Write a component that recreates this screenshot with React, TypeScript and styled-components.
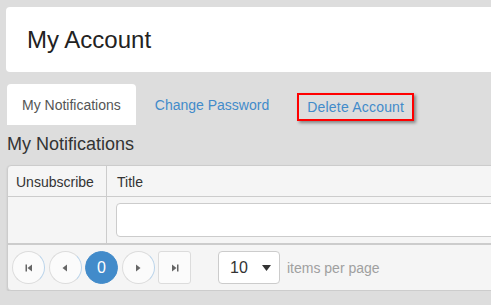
import React from "react";
import styled, { createGlobalStyle } from "styled-components";

const Global = createGlobalStyle`
  html, body { margin: 0; padding: 0; overflow: hidden; background: #dddddd; }
  body { font-family: "Liberation Sans", Arial, sans-serif; color: #333; }
`;

const Page = styled.div`
  width: 540px;
  padding: 7px 0 0 6px;
  box-sizing: border-box;
`;

const HeaderCard = styled.div`
  height: 65px;
  background: #fff;
  border-radius: 4px;
  display: flex;
  align-items: center;
  padding-left: 21px;
`;

const Title = styled.h1`
  margin: 0;
  font-size: 24px;
  font-weight: 400;
  color: #222;
`;

const Tabs = styled.div`
  display: flex;
  align-items: stretch;
  height: 41px;
  margin-top: 12px;
  padding-left: 1px;
`;

const Tab = styled.div<{ $active?: boolean }>`
  display: flex;
  align-items: center;
  padding: 0 15px;
  margin-right: 4px;
  font-size: 14px;
  border-radius: 4px 4px 0 0;
  background: ${(p) => (p.$active ? "#fff" : "transparent")};
  color: ${(p) => (p.$active ? "#555" : "#428bca")};
`;

const HighlightTab = styled.div`
  display: flex;
  align-items: center;
  margin-left: 9px;
`;

const Highlight = styled.span`
  display: flex;
  align-items: center;
  height: 24px;
  margin-top: 4px;
  padding: 0 8px 0 8px;
  border: 2px solid #ff0000;
  box-shadow: 2px 2px 3px rgba(0, 0, 0, 0.4);
  font-size: 14px;
  letter-spacing: 0.2px;
  color: #428bca;
`;

const Section = styled.div`
  padding-left: 1px;
`;

const SectionTitle = styled.h2`
  margin: 9px 0 11px;
  font-size: 18px;
  line-height: 20px;
  font-weight: 400;
  color: #333;
`;

const Grid = styled.div`
  border: 1px solid #ccc;
  border-radius: 4px;
  background: #f5f5f5;
  box-shadow: 0 1px 2px rgba(0, 0, 0, 0.12);
  overflow: hidden;
`;

const Row = styled.div<{ $height: number; $border?: string }>`
  display: grid;
  grid-template-columns: 99px 1fr;
  height: ${(p) => p.$height}px;
  border-bottom: ${(p) => p.$border || "none"};
`;

const HeadCell = styled.div<{ $first?: boolean; $pad: number }>`
  display: flex;
  align-items: center;
  padding-left: ${(p) => p.$pad}px;
  padding-top: 2px;
  font-size: 14px;
  color: #333;
  border-right: ${(p) => (p.$first ? "1px solid #ccc" : "none")};
`;

const FilterCell = styled.div<{ $first?: boolean }>`
  display: flex;
  align-items: center;
  padding: 0 0 0 9px;
  border-right: ${(p) => (p.$first ? "1px solid #ccc" : "none")};
`;

const FilterInput = styled.div`
  flex: 1;
  height: 32px;
  background: #fff;
  border: 1px solid #ccc;
  border-radius: 4px;
`;

const Pager = styled.div`
  display: flex;
  align-items: center;
  height: 45px;
  border-top: 2px solid #ccc;
  padding-left: 4px;
`;

const PagerButtons = styled.div`
  display: flex;
  gap: 3.5px;
`;

const PageButton = styled.div<{ $square?: boolean; $active?: boolean }>`
  width: 33px;
  height: 33px;
  box-sizing: border-box;
  display: flex;
  align-items: center;
  justify-content: center;
  border-radius: ${(p) => (p.$square ? "3px" : "50%")};
  border: 1px solid ${(p) => (p.$active ? "#428bca" : "#dcdcdc")};
  border-right-color: ${(p) => (p.$active ? "#428bca" : p.$square ? "#dcdcdc" : "#b9d3ea")};
  background: ${(p) => (p.$active ? "#428bca" : "#fbfbfb")};
  color: ${(p) => (p.$active ? "#fff" : "#555")};
  font-size: 16px;
`;

const Select = styled.div`
  display: flex;
  align-items: center;
  justify-content: space-between;
  width: 62px;
  height: 33px;
  box-sizing: border-box;
  margin-left: 27px;
  padding: 0 8px 0 11px;
  background: #fff;
  border: 1px solid #ccc;
  border-radius: 4px;
  font-size: 16px;
  color: #333;
`;

const PerPage = styled.span`
  margin-left: 7px;
  font-size: 14px;
  color: #a0a0a0;
`;

const Arrow = ({ dir, bar }: { dir: "l" | "r"; bar?: boolean }) => (
  <svg width="8" height="8" viewBox="0 0 8 8">
    {dir === "l" ? (
      <>
        {bar && <rect x="0.5" y="0.5" width="1.5" height="7" fill="#666" />}
        <polygon points={bar ? "7,0.5 7,7.5 2.5,4" : "6,0.5 6,7.5 1.5,4"} fill="#666" />
      </>
    ) : (
      <>
        <polygon points={bar ? "1,0.5 1,7.5 5.5,4" : "2,0.5 2,7.5 6.5,4"} fill="#666" />
        {bar && <rect x="6" y="0.5" width="1.5" height="7" fill="#666" />}
      </>
    )}
  </svg>
);

const Caret = () => (
  <svg width="9" height="6" viewBox="0 0 9 6">
    <polygon points="0,0 9,0 4.5,6" fill="#333" />
  </svg>
);

export default function App() {
  return (
    <>
      <Global />
      <Page>
        <HeaderCard>
          <Title>My Account</Title>
        </HeaderCard>
        <Tabs>
          <Tab $active>My Notifications</Tab>
          <Tab>Change Password</Tab>
          <HighlightTab>
            <Highlight>Delete Account</Highlight>
          </HighlightTab>
        </Tabs>
        <Section>
          <SectionTitle>My Notifications</SectionTitle>
          <Grid>
            <Row $height={30} $border="1px solid #ccc">
              <HeadCell $first $pad={8}>Unsubscribe</HeadCell>
              <HeadCell $pad={10}>Title</HeadCell>
            </Row>
            <Row $height={46}>
              <FilterCell $first />
              <FilterCell>
                <FilterInput />
              </FilterCell>
            </Row>
            <Pager>
              <PagerButtons>
                <PageButton><Arrow dir="l" bar /></PageButton>
                <PageButton><Arrow dir="l" /></PageButton>
                <PageButton $active>0</PageButton>
                <PageButton><Arrow dir="r" /></PageButton>
                <PageButton $square><Arrow dir="r" bar /></PageButton>
              </PagerButtons>
              <Select>
                <span>10</span>
                <Caret />
              </Select>
              <PerPage>items per page</PerPage>
            </Pager>
          </Grid>
        </Section>
      </Page>
    </>
  );
}
